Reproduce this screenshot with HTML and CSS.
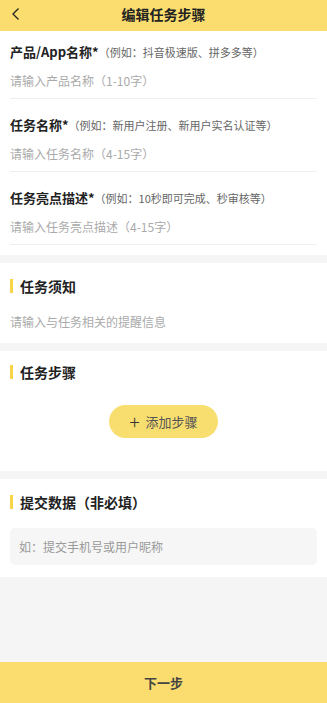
FILE: index.html
```html
<!DOCTYPE html>
<html lang="zh">
<head>
<meta charset="utf-8">
<title>编辑任务步骤</title>
<link rel="stylesheet" href="styles.css">
</head>
<body>
<div class="page">
  <header class="topbar">
    <svg class="back" width="10" height="14" viewBox="0 0 10 14"><path d="M7.5 1.5 L2 7 L7.5 12.5" fill="none" stroke="#222" stroke-width="1.3"/></svg>
    <h1 class="title">编辑任务步骤</h1>
  </header>
  <main class="main">
    <section class="card fields">
      <div class="field">
        <div class="label">产品/App名称*<span class="hint">（例如：抖音极速版、拼多多等）</span></div>
        <div class="ph">请输入产品名称（1-10字）</div>
      </div>
      <div class="field">
        <div class="label">任务名称*<span class="hint">（例如：新用户注册、新用户实名认证等）</span></div>
        <div class="ph">请输入任务名称（4-15字）</div>
      </div>
      <div class="field">
        <div class="label">任务亮点描述*<span class="hint">（例如：10秒即可完成、秒审核等）</span></div>
        <div class="ph">请输入任务亮点描述（4-15字）</div>
      </div>
    </section>
    <section class="card notice">
      <h2 class="head">任务须知</h2>
      <div class="ph notice-ph">请输入与任务相关的提醒信息</div>
    </section>
    <section class="card steps">
      <h2 class="head">任务步骤</h2>
      <div class="add-wrap">
        <button class="add"><span class="plus">+</span>添加步骤</button>
      </div>
    </section>
    <section class="card submit">
      <h2 class="head">提交数据（非必填）</h2>
      <div class="box">如：提交手机号或用户昵称</div>
    </section>
  </main>
  <footer class="next">下一步</footer>
</div>
</body>
</html>
```
FILE: styles.css
```css
* { box-sizing: border-box; margin: 0; padding: 0; }
html, body { height: 100%; }
body {
  font-family: "Noto Sans CJK SC", "Noto Sans", sans-serif;
  background: #f5f5f5;
  color: #222;
}
.page { height: 703px; display: flex; flex-direction: column; }
.topbar {
  height: 31px;
  background: #fadd6e;
  display: flex;
  align-items: center;
  justify-content: center;
  position: relative;
}
.back { position: absolute; left: 11px; top: 7px; }
.title { font-size: 14px; font-weight: bold; line-height: 20px; color: #222; margin-top: -4px; }
.main { flex: 1; }
.card { background: #fff; margin-bottom: 8px; }
.fields { padding: 0 10px 10px; }
.field { padding: 16px 0 7px; border-bottom: 1px solid #efefef; }
.field:first-child { padding-top: 11px; }
.label { font-size: 13px; font-weight: bold; line-height: 20px; color: #222; }
.hint { font-size: 11px; font-weight: normal; color: #666; }
.ph { font-size: 12px; line-height: 20px; color: #aaa; margin-top: 9px; }
.head {
  font-size: 14px;
  font-weight: bold;
  color: #222;
  padding-left: 7px;
  border-left: 3px solid #f8d449;
  line-height: 14px;
  margin-left: 10px;
}
.notice { padding: 16px 0 11px; }
.notice-ph { padding: 0 10px; margin-top: 19px; }
.steps { padding: 14px 0 33px; }
.add-wrap { display: flex; justify-content: center; margin-top: 26px; }
.add {
  width: 109px; height: 33px;
  border: none; border-radius: 17px;
  background: #f8de6e;
  font-family: inherit;
  font-size: 13px;
  color: #555;
  display: flex; align-items: center; justify-content: center;
}
.plus { font-size: 19px; font-weight: 300; margin-right: 6px; margin-top: -2px; color: #333; }
.submit { padding: 16px 10px 12px 0; }
.box {
  margin: 19px 0 0 10px;
  height: 37px;
  background: #f6f6f6;
  border-radius: 5px;
  padding-left: 9px;
  font-size: 12px;
  line-height: 37px;
  color: #999;
}
.next {
  height: 41px;
  background: #fadd6e;
  display: flex; align-items: center; justify-content: center;
  font-size: 13px;
  font-weight: bold;
  color: #444;
}
```
